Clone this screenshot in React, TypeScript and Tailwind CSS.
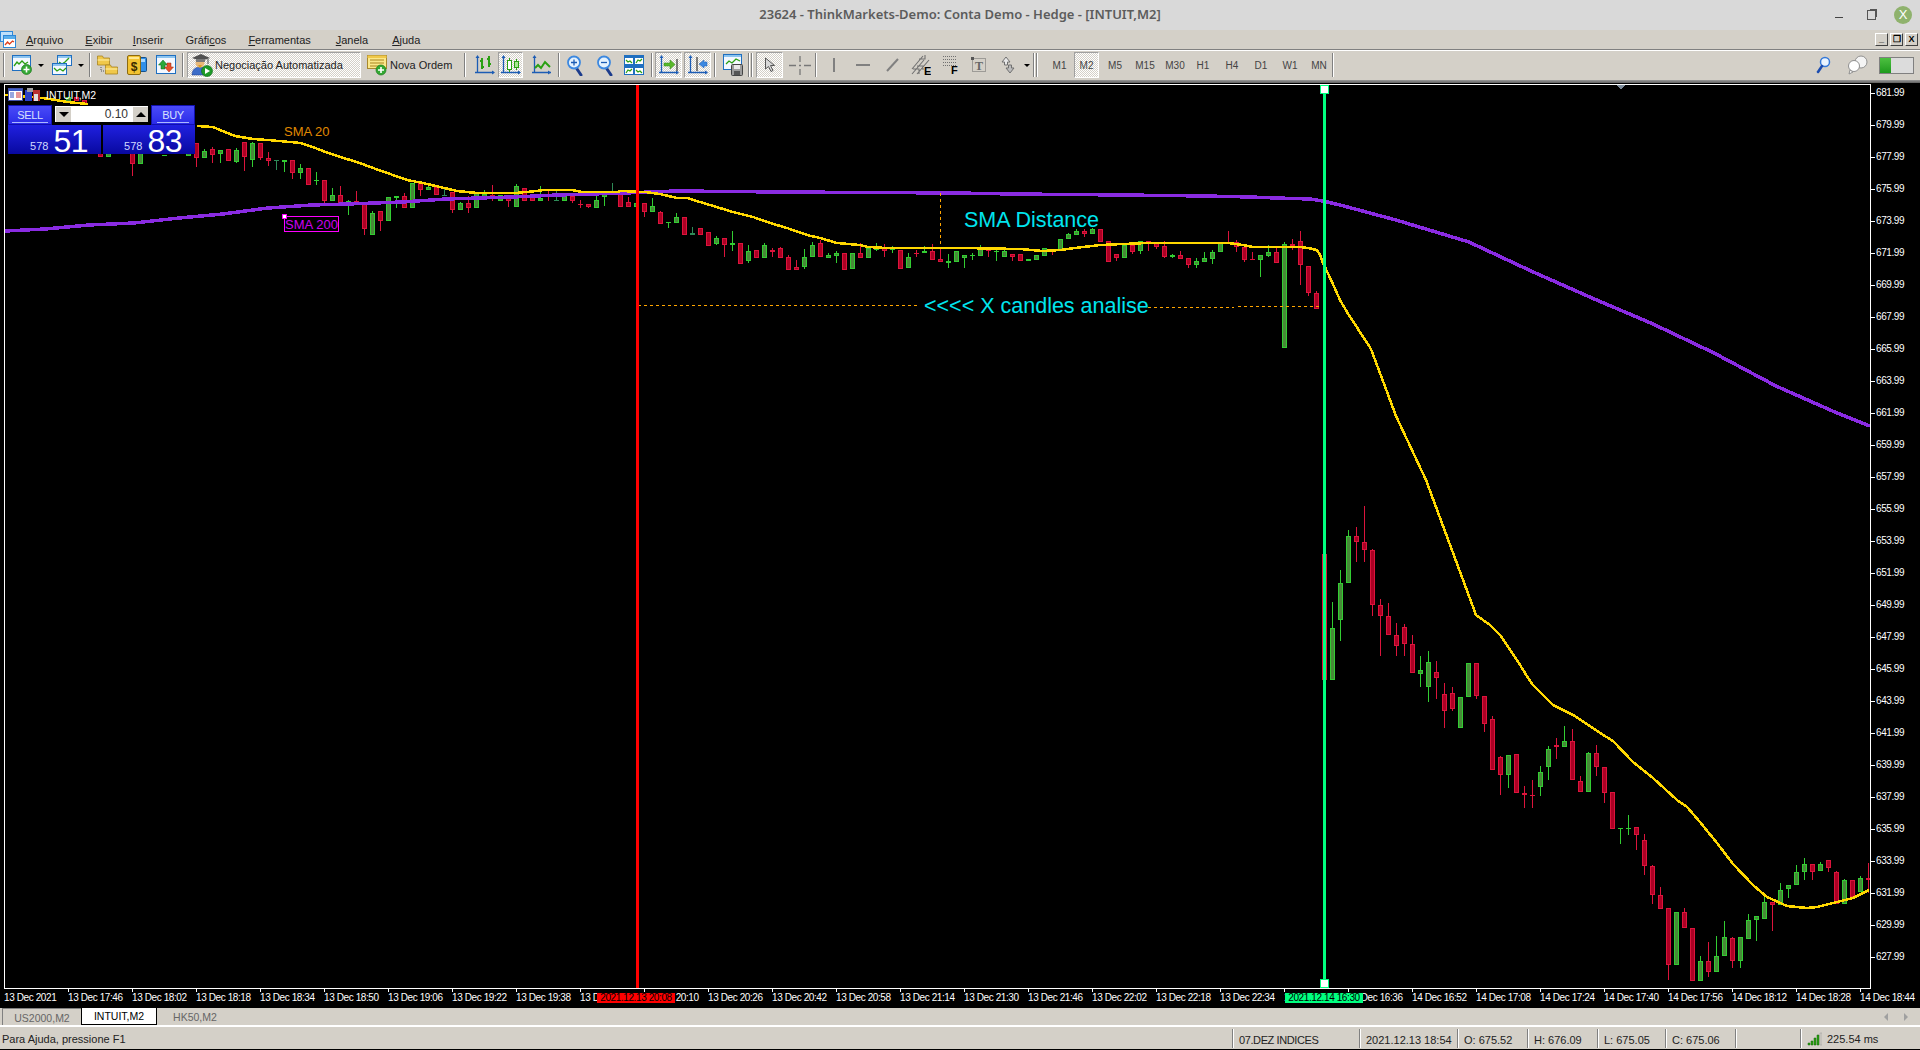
import React from "react";

const D =
  "r 143 158 143 167|g 151 158 149 158|r 149 155 147 163|g 150 154 150 163|r 149 161 149 161|g 150 162 148 163|r 142 157 142 171|g 143 160 142 167|r 143 158 143 160|r 158 161 152 166|d 160 161 160 170|g 160 162 160 172|r 160 173 160 179|g 168 173 164 179|r 168 185 168 185|g 180 181 172 185|r 180 201 180 203|g 195 201 188 201|r 195 203 186 203|g 201 204 200 215|r 201 203 191 203|r 204 229 204 235|g 213 235 211 235|r 211 221 211 231|g 197 221 197 221|g 196 198 196 208|r 196 208 193 208|g 183 208 183 208|r 183 190 183 196|g 187 190 185 190|r 187 195 187 195|d 195 196 188 196|r 192 210 192 213|g 203 210 202 210|r 203 208 196 213|g 193 208 193 208|g 194 198 190 198|r 195 196 185 201|g 195 201 195 201|r 198 201 198 207|g 186 207 184 207|r 188 201 188 201|r 195 201 195 201|g 198 201 186 201|r 195 196 191 201|d 200 201 191 201|g 196 201 196 201|r 196 201 196 203|r 204 205 200 208|r 204 207 204 208|g 200 208 195 208|g 194 197 194 206|d 192 193 183 193|r 193 207 193 207|r 202 207 197 207|" +
  "g 203 207 203 207|r 203 212 203 217|g 206 212 198 212|r 212 224 211 224|g 222 223 222 228|g 217 223 213 223|r 217 235 217 235|d 233 235 227 235|r 228 235 228 235|r 232 246 232 246|g 238 244 236 245|r 238 245 238 257|g 243 245 231 251|r 243 264 243 264|g 251 261 245 263|r 250 258 250 258|g 245 258 243 258|r 250 252 248 257|r 248 258 247 258|r 257 270 255 270|r 267 270 260 270|g 257 267 249 269|g 245 257 242 257|r 243 257 240 257|g 255 258 253 258|g 253 256 251 263|r 253 270 253 270|g 253 269 253 269|r 253 258 243 258|g 248 258 248 258|g 248 250 243 251|r 247 251 244 257|g 249 250 246 253|r 250 269 250 269|g 257 268 253 268|r 253 254 250 257|g 251 253 246 253|r 251 260 244 260|r 259 262 248 262|g 261 263 254 268|g 251 262 251 262|g 255 258 255 268|g 255 256 253 260|g 249 256 245 256|r 249 251 249 257|g 251 252 247 261|g 251 257 247 257|r 254 257 254 261|r 254 261 254 261|g 259 261 259 261|g 255 260 255 260|g 248 256 248 256|" +
  "r 249 251 249 255|g 239 250 239 250|g 234 239 233 239|g 231 235 229 235|r 231 234 229 237|g 229 234 228 234|r 229 242 229 242|r 241 262 241 262|r 254 258 254 261|g 245 258 245 258|r 245 252 245 254|g 241 251 241 254|r 241 244 241 251|r 243 247 243 249|r 246 257 241 258|g 255 257 254 258|r 255 259 251 259|r 258 265 258 268|g 261 265 258 268|g 258 262 252 262|g 252 259 250 264|g 243 252 243 252|r 242 243 231 243|r 242 247 240 252|r 247 260 247 262|r 259 260 252 260|g 255 260 255 277|g 252 256 245 257|r 252 263 247 263|g 244 348 242 348|r 244 246 239 250|r 241 265 231 285|r 266 293 266 296|r 293 309 291 309|r 554 680 554 680|" +
  "g 628 680 602 680|g 583 620 570 641|g 536 583 530 583|r 536 542 527 562|r 542 550 506 562|r 550 605 549 616|r 605 616 599 656|r 616 635 603 635|r 635 646 623 656|r 627 644 624 656|r 644 673 635 673|g 670 674 656 687|g 662 687 651 702|r 672 678 661 699|r 694 711 683 728|r 693 709 687 711|g 697 728 697 728|g 663 697 663 697|r 663 696 663 699|r 696 724 696 732|r 719 770 716 770|r 757 775 756 795|g 755 775 755 788|r 754 793 754 793|r 793 795 786 808|r 795 796 780 808|g 772 787 766 796|g 749 767 746 780|r 745 747 738 759|g 741 747 726 747|r 741 780 729 780|r 781 792 776 792|g 753 792 752 792|r 753 767 745 776|r 767 793 767 803|r 792 829 792 829|" +
  "g 828 829 828 844|g 828 829 815 835|r 827 835 827 850|r 840 866 834 875|r 866 895 865 904|r 895 909 887 909|r 908 965 908 980|g 912 965 912 965|r 912 928 908 928|r 928 981 928 981|g 961 981 956 981|r 961 972 942 977|g 956 972 936 972|g 937 956 921 956|r 938 961 937 968|g 937 961 937 968|g 920 939 914 939|g 916 920 916 941|g 902 919 896 919|r 902 905 902 931|g 890 905 883 905|g 885 889 885 898|g 872 885 865 885|g 864 872 858 880|r 864 872 864 880|g 864 871 862 871|r 860 868 860 872|r 872 904 871 904|g 880 904 879 904|r 880 897 880 897|g 878 892 876 892|r 878 880 863 893";

type C = { x: number; c: string; a: number; b: number; t: number; l: number };
const candles: C[] = D.split("|").map((s, i) => {
  const [c, a, b, t, l] = s.split(" ");
  return { x: 196 + 8 * i, c, a: +a, b: +b, t: +t, l: +l };
});
const extra: C[] = [
  { x: 68, c: "g", a: 97, b: 103, t: 97, l: 103 },
  { x: 76, c: "r", a: 97, b: 101, t: 97, l: 101 },
  { x: 84, c: "r", a: 100, b: 104, t: 100, l: 104 },
  { x: 100, c: "r", a: 150, b: 157, t: 150, l: 157 },
  { x: 108, c: "g", a: 150, b: 157, t: 150, l: 157 },
  { x: 132, c: "r", a: 150, b: 164, t: 150, l: 176 },
  { x: 140, c: "g", a: 150, b: 164, t: 150, l: 164 },
  { x: 164, c: "g", a: 155, b: 156, t: 155, l: 156 },
  { x: 188, c: "g", a: 150, b: 156, t: 150, l: 156 },
];

const EDGE: Record<string, string> = { r: "#dc143c", g: "#32cd32", d: "#2e8b57" };
const FILL: Record<string, string> = { r: "#ad0024", g: "#478a38", d: "#2e8b57" };

const yellowA = "5,95 33,97 50,99 67,102 88,104";
const yellowB =
  "197,126 213,127 220,130 235,136 253,139 268,140 290,142 300,143 310,146 323,151 340,157 357,162 373,168 390,174 407,180 423,183 440,187 457,191 477,193 515,193 537,191 543,190 572,190 582,192 618,192 620,191 645,192 660,194 677,198 687,198 710,205 733,212 753,217 770,223 787,228 807,235 820,238 837,243 860,245 868,247 887,248 963,248 1020,249 1043,251 1060,250 1075,248 1092,246 1100,245 1123,244 1147,243 1228,243 1243,245 1253,247 1300,247 1308,248 1317,250 1320,255 1323,263 1332,282 1340,300 1347,312 1371,349 1396,416 1426,480 1476,615 1490,625 1500,635 1517,660 1525,673 1533,685 1553,705 1573,715 1593,728 1600,733 1613,741 1633,762 1653,778 1677,800 1687,807 1700,822 1717,843 1733,864 1753,885 1767,897 1787,906 1807,908 1817,907 1833,903 1853,898 1869,890";
const purple =
  "5,231 45,229 89,225 134,223 179,218 223,214 268,208 312,205 348,204 402,202 446,199 513,197 558,195 625,193 676,191 781,192 957,193 1013,194 1124,195 1205,196 1251,197 1276,198 1310,199 1323,201 1340,205 1396,220 1469,242 1531,271 1592,298 1653,324 1714,353 1776,386 1837,413 1870,426";

const prices = Array.from({ length: 28 }, (_, i) => (681.99 - i * 2).toFixed(2));
const times = [
  "13 Dec 17:46", "13 Dec 18:02", "13 Dec 18:18", "13 Dec 18:34", "13 Dec 18:50", "13 Dec 19:06", "13 Dec 19:22", "13 Dec 19:38",
  "13 Dec 19:54", "13 Dec 20:10", "13 Dec 20:26", "13 Dec 20:42", "13 Dec 20:58", "13 Dec 21:14", "13 Dec 21:30", "13 Dec 21:46",
  "13 Dec 22:02", "13 Dec 22:18", "13 Dec 22:34", "13 Dec 22:50", "14 Dec 16:36", "14 Dec 16:52", "14 Dec 17:08", "14 Dec 17:24",
  "14 Dec 17:40", "14 Dec 17:56", "14 Dec 18:12", "14 Dec 18:28", "14 Dec 18:44",
];

function Chart() {
  return (
    <svg width={1865} height={903} viewBox="5 85 1865 903" className="block" shapeRendering="crispEdges">
      {[...extra, ...candles].map((k) => {
        const h = k.b - k.a;
        return (
          <g key={k.x}>
            <rect x={k.x} y={k.t} width={1} height={k.l - k.t} fill={EDGE[k.c]} />
            {h <= 2 ? (
              <rect x={k.x - 2} y={k.a} width={5} height={Math.max(h, 1)} fill={EDGE[k.c]} />
            ) : (
              <rect x={k.x - 1.5} y={k.a + 0.5} width={4} height={h - 1} fill={FILL[k.c]} stroke={EDGE[k.c]} strokeWidth={1} />
            )}
          </g>
        );
      })}
      <polyline points={purple} fill="none" stroke="#8a2be2" strokeWidth={3.5} />
      <polyline points={yellowA} fill="none" stroke="#ffd700" strokeWidth={2.5} />
      <polyline points={yellowB} fill="none" stroke="#ffd700" strokeWidth={2.5} />
      <line x1={638} x2={920} y1={305.5} y2={305.5} stroke="#ffa500" strokeDasharray="3 3" />
      <line x1={1148} x2={1234} y1={307.5} y2={307.5} stroke="#ffa500" strokeDasharray="3 3" />
      <line x1={1238} x2={1322} y1={306.5} y2={306.5} stroke="#ffa500" strokeDasharray="3 3" />
      <line x1={940.5} x2={940.5} y1={193} y2={247} stroke="#ffa500" strokeDasharray="3 3" />
      <rect x={636} y={85} width={3} height={903} fill="#ff0000" />
      <rect x={1323} y={85} width={3} height={903} fill="#00ff7f" />
      <rect x={1320.5} y={85.5} width={8} height={8} fill="#fff" stroke="#00ff7f" />
      <rect x={1320.5} y={979.5} width={8} height={8} fill="#fff" stroke="#00ff7f" />
      <path d="M1617 85h8l-4 5z" fill="#7c8a99" />
    </svg>
  );
}

const blue = "#1f6fc0";
const green = "#2aa012";

function Win({ x, y, w, h }: { x: number; y: number; w: number; h: number }) {
  return (
    <g>
      <rect x={x + 0.5} y={y + 0.5} width={w - 1} height={h - 1} fill="#f4f8ff" stroke={blue} />
      <rect x={x + 1} y={y + 1} width={w - 2} height={2} fill="#8cc4f0" />
    </g>
  );
}
function Plus({ x, y }: { x: number; y: number }) {
  return (
    <g>
      <circle cx={x} cy={y} r={5} fill="#33a833" stroke="#1c7a1c" strokeWidth={0.7} />
      <path d={`M${x - 3} ${y}h6M${x} ${y - 3}v6`} stroke="#fff" strokeWidth={1.6} />
    </g>
  );
}
const IconNew = () => (
  <svg width={20} height={20} viewBox="0 0 20 20">
    <Win x={0} y={0} w={19} h={16} />
    <path d="M2 11l3-4 2 2 3-3 3 3 3-2" fill="none" stroke={green} strokeWidth={1.3} />
    <Plus x={14.5} y={14.5} />
  </svg>
);
const IconProfiles = () => (
  <svg width={20} height={20} viewBox="0 0 20 20">
    <Win x={5} y={0} w={15} h={11} />
    <path d="M7 7l3 2 3-2 4-4" fill="none" stroke={green} strokeWidth={1.3} />
    <Win x={0} y={8} w={15} h={12} />
    <path d="M2 13l3 3 3-2 3 2 3-3" fill="none" stroke={green} strokeWidth={1.3} />
  </svg>
);
const Folder = ({ x, y, w }: { x: number; y: number; w: number }) => (
  <g>
    <path d={`M${x} ${y + 1}h5l1 2h${w - 6}v7h-${w}z`} fill="#f0c84a" stroke="#a88420" strokeWidth={0.8} />
    <path d={`M${x} ${y + 5}h${w}`} stroke="#fff0a8" strokeWidth={1} />
  </g>
);
const IconFolder = () => (
  <svg width={21} height={20} viewBox="0 0 21 20">
    <Folder x={0.5} y={0} w={12} />
    <Folder x={8.5} y={9} w={12} />
    <path d="M4 12v4h4" fill="none" stroke="#555" strokeDasharray="1 1" />
  </svg>
);
const IconMarket = () => (
  <svg width={20} height={20} viewBox="0 0 20 20">
    <rect x={7.5} y={2.5} width={12} height={14} rx={1} fill="#2f8fe8" stroke="#14508c" />
    <rect x={9} y={4} width={9} height={3} fill="#a8d8ff" />
    <rect x={0.5} y={0.5} width={13} height={19} rx={1.5} fill="#f2c230" stroke="#8c6a10" />
    <rect x={2} y={2} width={10} height={2} fill="#ffe890" />
    <text x={7} y={16} textAnchor="middle" fontSize={12} fontWeight={700} fill="#3a2a00" fontFamily="Liberation Sans, sans-serif">$</text>
  </svg>
);
const IconUpDown = () => (
  <svg width={20} height={20} viewBox="0 0 20 20">
    <Win x={0} y={0} w={20} h={19} />
    <path d="M7 5l-4.5 5H5v4h4v-4h2.5z" fill="#2aa83a" stroke="#116a1c" strokeWidth={0.5} />
    <path d="M13 17l4.5-5H15V8h-4v4H8.5z" fill="#e8502a" stroke="#98280c" strokeWidth={0.5} />
  </svg>
);
const IconAuto = () => (
  <svg width={22} height={24} viewBox="0 0 22 24">
    <path d="M1 22c0-6 4-8 8-8s7 2 8 8z" fill="#3c6cc8" stroke="#24408c" strokeWidth={0.5} />
    <circle cx={9} cy={10} r={4.5} fill="#e8b878" />
    <path d="M7 12l2 3 2-3z" fill="#e0a020" />
    <path d="M1 5l9-4 9 4-9 3z" fill="#505050" />
    <path d="M5 6v3h9V6z" fill="#787878" />
    <path d="M17 6v5" stroke="#505050" />
    <circle cx={16} cy={18} r={5.5} fill="#1e9a28" stroke="#0e6a18" strokeWidth={0.6} />
    <path d="M14 15l5 3-5 3z" fill="#fff" />
  </svg>
);
const IconOrder = () => (
  <svg width={20} height={21} viewBox="0 0 20 21">
    <rect x={0.5} y={0.5} width={19} height={13} fill="#fbe88a" stroke="#a8882c" />
    <rect x={0.5} y={0.5} width={19} height={2.5} fill="#f0c84a" />
    <path d="M3 5h14M3 8h14M3 11h9" stroke="#a88420" />
    <Plus x={14} y={15} />
  </svg>
);
const Axes = () => <path d="M3.5 2v16M1 17.5h19" stroke="#1c5cb4" strokeWidth={1.3} fill="none" />;
const IconBars = () => (
  <svg width={22} height={20} viewBox="0 0 22 20">
    <path d="M3.5 0l-2 3h4zM21 17.5l-3-2v4z" fill="#1c5cb4" />
    <Axes />
    <path d="M8 3v11M6 6h2M8 12h2M15 1v11M13 4h2M15 9h2" stroke={green} strokeWidth={2} fill="none" />
  </svg>
);
const IconCandles = () => (
  <svg width={21} height={20} viewBox="0 0 21 20">
    <path d="M3.5 0l-2 3h4zM21 17.5l-3-2v4z" fill="#1c5cb4" />
    <Axes />
    <rect x={7.5} y={5.5} width={4} height={9} fill="#fff" stroke={green} />
    <rect x={14.5} y={6.5} width={4} height={6} fill="#a8e890" stroke={green} />
    <path d="M9.5 3v2M9.5 15v2M16.5 4v2M16.5 13v2" stroke={green} />
  </svg>
);
const IconLine = () => (
  <svg width={20} height={20} viewBox="0 0 20 20">
    <path d="M3.5 0l-2 3h4zM20 17.5l-3-2v4z" fill="#1c5cb4" />
    <Axes />
    <path d="M4 13l3-3 3 3 4-6 5 5" fill="none" stroke={green} strokeWidth={2} />
  </svg>
);
const IconZoom = ({ plus }: { plus?: boolean }) => (
  <svg width={16} height={21} viewBox="0 0 16 21">
    <path d="M10 14l4 6" stroke="#1c3c8c" strokeWidth={3} strokeLinecap="round" />
    <circle cx={7} cy={7.5} r={6} fill="#e4f2ff" stroke="#3c88e0" strokeWidth={1.8} />
    <path d={plus ? "M4 7.5h6M7 4.5v6" : "M4 7.5h6"} stroke="#1c5cb4" strokeWidth={1.3} />
  </svg>
);
const Tile = ({ x, y, up }: { x: number; y: number; up?: boolean }) => (
  <g>
    <rect x={x + 0.5} y={y + 0.5} width={9} height={9} fill="#fff" stroke={blue} />
    <rect x={x + 1} y={y + 1} width={8} height={2} fill={blue} />
    <path d={up ? `M${x + 2} ${y + 8}l2-3 2 1 2-2` : `M${x + 2} ${y + 5}l2 2 2-1 2 2`} fill="none" stroke={green} strokeWidth={1.2} />
  </g>
);
const IconTile = () => (
  <svg width={20} height={20} viewBox="0 0 20 20">
    <Tile x={0} y={0} />
    <Tile x={10} y={0} up />
    <Tile x={0} y={10} up />
    <Tile x={10} y={10} />
  </svg>
);
const IconScroll = () => (
  <svg width={22} height={20} viewBox="0 0 22 20">
    <path d="M3.5 0l-2 3h4zM21 17.5l-3-2v4z" fill="#1c5cb4" />
    <Axes />
    <path d="M19 4v12" stroke="#333" strokeWidth={1.2} />
    <path d="M6 8h6V5l5 4.5L12 14v-3H6z" fill="#5ab82a" stroke="#2a8812" strokeWidth={0.5} />
  </svg>
);
const IconShift = () => (
  <svg width={22} height={20} viewBox="0 0 22 20">
    <path d="M3.5 0l-2 3h4zM21 17.5l-3-2v4z" fill="#1c5cb4" />
    <Axes />
    <path d="M10 2v14" stroke="#333" strokeWidth={1.2} />
    <path d="M20 7h-3V5l-5 4 5 4v-2h3z" fill="#3c88e0" stroke="#1c5cb4" strokeWidth={0.5} />
  </svg>
);
const IconTemplate = () => (
  <svg width={20} height={22} viewBox="0 0 20 22">
    <Win x={0} y={0} w={19} h={16} />
    <path d="M3 10l3-3 3 2 4-4 4 2" fill="none" stroke={green} strokeWidth={1.3} />
    <rect x={8.5} y={10.5} width={11} height={11} rx={1} fill="#9c9c9c" stroke="#444" />
    <rect x={11} y={11} width={6} height={4} fill="#e8e8e8" />
    <rect x={11} y={17} width={6} height={4} fill="#555" />
  </svg>
);
const IconPointer = () => (
  <svg width={12} height={16} viewBox="0 0 12 16">
    <path d="M1.5 1v11l3-2.5 2.5 5 2-1-2.5-5h4z" fill="#d8d8d8" stroke="#555" />
  </svg>
);
const IconCross = () => (
  <svg width={22} height={19} viewBox="0 0 22 19">
    <path d="M0 9.5h7M15 9.5h7M11 0v6M11 13v6M10 9.5h2" stroke="#777" strokeWidth={1.3} />
  </svg>
);
const IconV = () => <svg width={4} height={16} viewBox="0 0 4 16"><path d="M2 1v14" stroke="#808080" strokeWidth={2} /></svg>;
const IconH = () => <svg width={14} height={4} viewBox="0 0 14 4"><path d="M0 2h14" stroke="#808080" strokeWidth={2} /></svg>;
const IconTrend = () => <svg width={13} height={14} viewBox="0 0 13 14"><path d="M1 13L12 1" stroke="#808080" strokeWidth={2} /></svg>;
const IconFiboE = () => (
  <svg width={20} height={22} viewBox="0 0 20 22">
    <path d="M1 20l12-14M1 15l11-13M6 20L18 6M8 5h6v-4M2 15h6v5M6 12h6v4" fill="none" stroke="#707070" strokeWidth={1.1} />
    <text x={13} y={21} fontSize={11} fontWeight={700} fill="#000" fontFamily="Liberation Sans, sans-serif">E</text>
  </svg>
);
const IconFiboF = () => (
  <svg width={16} height={20} viewBox="0 0 16 20">
    <path d="M0 1.5h14M0 4.5h14M0 7.5h14M0 10.5h14" stroke="#707070" strokeDasharray="1 1" />
    <text x={8} y={19} fontSize={11} fontWeight={700} fill="#000" fontFamily="Liberation Sans, sans-serif">F</text>
  </svg>
);
const IconText = () => (
  <svg width={16} height={16} viewBox="0 0 16 16">
    <rect x={1.5} y={1.5} width={13} height={13} fill="none" stroke="#666" strokeDasharray="1 1" />
    <rect x={0} y={0} width={3} height={3} fill="#555" />
    <text x={8} y={13} textAnchor="middle" fontSize={12} fontWeight={700} fill="#666" fontFamily="Liberation Serif, serif">T</text>
  </svg>
);
const IconArrows = () => (
  <svg width={14} height={18} viewBox="0 0 14 18">
    <path d="M5 1L1 6h2.5v3h3V6H9z" fill="#e8e8e8" stroke="#707070" />
    <path d="M9 17l4-5h-2.5V9h-3v3H5z" fill="#bcbcbc" stroke="#707070" />
  </svg>
);
const Caret = () => <span className="w-0 h-0 border-x-[3px] border-x-transparent border-t-[3px] border-t-black" />;
const Sep = () => <span className="block w-[2px] h-[24px] border-l border-r border-l-[#808080] border-r-white" />;
const Sel = ({ w, children }: { w: string; children: React.ReactNode }) => (
  <span className={`${w} h-[26px] flex items-center justify-center border border-t-[#a0a0a0] border-l-[#a0a0a0] border-r-white border-b-white bg-[repeating-conic-gradient(#ffffff_0_25%,#d4d0c8_0_50%)] bg-[length:2px_2px]`}>
    {children}
  </span>
);

function Toolbar() {
  return (
    <div className="h-[31px] bg-[#d4d0c8] border-t border-[#808080] shadow-[inset_0_1px_0_#ffffff] flex items-center text-[11px] text-[#222] whitespace-nowrap">
      <span className="ml-[3px] flex"><Sep /></span>
      <span className="ml-[7px] flex"><IconNew /></span>
      <span className="ml-[6px] flex"><Caret /></span>
      <span className="ml-[8px] flex"><IconProfiles /></span>
      <span className="ml-[6px] flex"><Caret /></span>
      <span className="ml-[5px] flex"><Sep /></span>
      <span className="ml-[6px] flex"><IconFolder /></span>
      <span className="ml-[9px] flex"><IconMarket /></span>
      <span className="ml-[9px] flex"><IconUpDown /></span>
      <span className="ml-[6px] flex"><Sep /></span>
      <span className="ml-[3px] flex">
        <Sel w="w-[174px] gap-[2px] justify-start! pl-[3px]">
          <IconAuto />
          <span>Negociação Automatizada</span>
        </Sel>
      </span>
      <span className="ml-[6px] flex"><IconOrder /></span>
      <span className="ml-[3px] w-[60px]">Nova Ordem</span>
      <span className="ml-[14px] flex"><Sep /></span>
      <span className="ml-[8px] flex"><IconBars /></span>
      <span className="ml-[2px] flex"><Sel w="w-[25px]"><IconCandles /></Sel></span>
      <span className="ml-[8px] flex"><IconLine /></span>
      <span className="ml-[7px] flex"><Sep /></span>
      <span className="ml-[7px] flex"><IconZoom plus /></span>
      <span className="ml-[14px] flex"><IconZoom /></span>
      <span className="ml-[11px] flex"><IconTile /></span>
      <span className="ml-[7px] flex"><Sep /></span>
      <span className="ml-[2px] flex"><Sel w="w-[27px]"><IconScroll /></Sel></span>
      <span className="ml-[2px] flex"><Sel w="w-[27px]"><IconShift /></Sel></span>
      <span className="ml-[3px] flex"><Sep /></span>
      <span className="ml-[7px] flex"><IconTemplate /></span>
      <span className="ml-[5px] flex"><Sep /></span>
      <span className="ml-[1px] flex"><Sep /></span>
      <span className="ml-[3px] flex"><Sel w="w-[27px]"><IconPointer /></Sel></span>
      <span className="ml-[6px] flex"><IconCross /></span>
      <span className="ml-[4px] flex"><Sep /></span>
      <span className="ml-[15px] flex"><IconV /></span>
      <span className="ml-[20px] flex"><IconH /></span>
      <span className="ml-[16px] flex"><IconTrend /></span>
      <span className="ml-[12px] flex"><IconFiboE /></span>
      <span className="ml-[12px] flex"><IconFiboF /></span>
      <span className="ml-[12px] flex"><IconText /></span>
      <span className="ml-[14px] flex"><IconArrows /></span>
      <span className="ml-[9px] flex"><Caret /></span>
      <span className="ml-[3px] flex"><Sep /></span>
      <span className="ml-[1px] flex"><Sep /></span>
      <div className="ml-[7px] flex items-center text-center text-[10px] text-[#444]">
        <span className="w-[29px]">M1</span>
        <Sel w="w-[25px]">M2</Sel>
        <span className="w-[32px]">M5</span>
        <span className="w-[28px]">M15</span>
        <span className="w-[32px]">M30</span>
        <span className="w-[24px]">H1</span>
        <span className="w-[34px]">H4</span>
        <span className="w-[24px]">D1</span>
        <span className="w-[34px]">W1</span>
        <span className="w-[24px]">MN</span>
      </div>
      <span className="ml-[1px] flex"><Sep /></span>
      <span className="ml-auto flex">
        <svg width={16} height={18} viewBox="0 0 16 18">
          <circle cx={10} cy={6} r={4.5} fill="#eaf4ff" stroke="#3478d8" strokeWidth={1.5} />
          <path d="M7 10l-4 6" stroke="#1c4cb0" strokeWidth={2.5} strokeLinecap="round" />
        </svg>
      </span>
      <span className="ml-[16px] flex">
        <svg width={22} height={20} viewBox="0 0 22 20">
          <circle cx={14} cy={7} r={6} fill="#f4f4f4" stroke="#909090" />
          <circle cx={7} cy={11} r={5.5} fill="#fff" stroke="#909090" />
          <path d="M3 15l-1 4 4-2z" fill="#fff" stroke="#909090" />
        </svg>
      </span>
      <span className="ml-[10px] mr-[6px] w-[35px] h-[17px] border border-[#808080] bg-[#dcdcdc] flex">
        <span className="w-[11px] bg-gradient-to-b from-[#4cc040] to-[#1c9a1c]" />
      </span>
    </div>
  );
}

function MenuBar() {
  const it = "text-[#222] whitespace-nowrap";
  return (
    <div className="h-[19px] bg-[#d4d0c8] flex items-center text-[11px] pt-[2px]">
      <svg width={16} height={17} viewBox="0 0 16 17" className="shrink-0 -mt-[2px]">
        <rect x={0.5} y={0.5} width={12} height={10} fill="#bfe0fa" stroke="#2e88d8" />
        <rect x={3.5} y={4.5} width={12} height={12} fill="#fff" stroke="#2e88d8" />
        <rect x={4} y={5} width={11} height={3} fill="#5aaeea" />
        <path d="M5 14l2.5-3 2 2 3-3 1.5 1" fill="none" stroke="#e0401c" strokeWidth={1.3} />
      </svg>
      <span className={`${it} ml-[10px]`}><span className="underline">A</span>rquivo</span>
      <span className={`${it} ml-[22px]`}><span className="underline">E</span>xibir</span>
      <span className={`${it} ml-[20px]`}><span className="underline">I</span>nserir</span>
      <span className={`${it} ml-[22px]`}>Gráfi<span className="underline">c</span>os</span>
      <span className={`${it} ml-[22px]`}><span className="underline">F</span>erramentas</span>
      <span className={`${it} ml-[25px]`}><span className="underline">J</span>anela</span>
      <span className={`${it} ml-[24px]`}><span className="underline">A</span>juda</span>
      <div className="ml-auto mr-[2px] -mt-[2px] flex gap-[2px]">
        {["_", "❐", "X"].map((g) => (
          <span key={g} className="w-[13px] h-[13px] bg-[#d4d0c8] border border-t-white border-l-white border-r-[#404040] border-b-[#404040] text-[9px] leading-[11px] text-center font-bold text-black">
            {g}
          </span>
        ))}
      </div>
    </div>
  );
}

function TitleBar() {
  return (
    <div className="h-[30px] bg-[#d9d9d9] relative flex items-center justify-center">
      <span className="text-[13px] font-semibold text-[#5c5c5c] font-['Noto_Sans',sans-serif]">
        23624 - ThinkMarkets-Demo: Conta Demo - Hedge - [INTUIT,M2]
      </span>
      <div className="absolute right-[8px] top-[6px] flex items-center">
        <span className="w-[8px] h-[1px] bg-[#444] mt-[5px]" />
        <span className="ml-[24px] w-[9px] h-[10px] border border-[#555] shadow-[2px_-2px_0_-1px_#555]" />
        <span className="ml-[18px] w-[18px] h-[18px] rounded-full bg-[#8fb26d] text-white text-[13px] leading-[18px] text-center font-['Liberation_Sans',sans-serif]">
          X
        </span>
      </div>
    </div>
  );
}

function Panel() {
  return (
    <div className="absolute left-[3px] top-[20px] w-[187px] h-[49px] bg-black flex flex-col font-['Liberation_Sans',sans-serif] text-white">
      <div className="h-[20px] flex items-start">
        <div className="w-[44px] h-[20px] bg-gradient-to-b from-[#4a4af8] to-[#2a2ae8] border border-[#1010b0] text-[11px] text-[#d8e0ff] text-center leading-[19px] tracking-[-0.3px]">
          <span className="border-b border-[#aab8ff] px-[5px] pb-[1px]">SELL</span>
        </div>
        <div className="ml-[3px] mt-[1px] h-[16px] w-[93px] flex">
          <span className="w-[16px] bg-[#d4d0c8] flex items-center justify-center border-t border-l border-white"><span className="w-0 h-0 border-x-[5px] border-x-transparent border-t-[5px] border-t-black" /></span>
          <span className="flex-1 bg-white text-[#333] text-[12px] leading-[16px] text-right pr-[4px]">0.10</span>
          <span className="w-[16px] bg-[#d4d0c8] flex items-center justify-center border-t border-l border-white"><span className="w-0 h-0 border-x-[5px] border-x-transparent border-b-[5px] border-b-black" /></span>
        </div>
        <div className="ml-[3px] w-[44px] h-[20px] bg-gradient-to-b from-[#4a4af8] to-[#2a2ae8] border border-[#1010b0] text-[11px] text-[#d8e0ff] text-center leading-[19px] tracking-[-0.3px]">
          <span className="border-b border-[#aab8ff] px-[5px] pb-[1px]">BUY</span>
        </div>
      </div>
      <div className="h-[29px] flex gap-[2px]">
        <div className="w-[93px] bg-gradient-to-b from-[#2020e0] to-[#0808a0] flex items-end justify-end pr-[13px]">
          <span className="text-[11px] leading-[16px] text-[#d0d8ff] mr-[5px]">578</span>
          <span className="text-[32px] leading-[25px] font-medium tracking-[-0.5px]">51</span>
        </div>
        <div className="w-[92px] bg-gradient-to-b from-[#2020e0] to-[#0808a0] flex items-end justify-end pr-[13px]">
          <span className="text-[11px] leading-[16px] text-[#d0d8ff] mr-[5px]">578</span>
          <span className="text-[32px] leading-[25px] font-medium tracking-[-0.5px]">83</span>
        </div>
      </div>
    </div>
  );
}

function Overlays() {
  const base = "absolute whitespace-nowrap font-['Liberation_Sans',sans-serif]";
  return (
    <>
      <div className="absolute left-[3px] top-[3px] flex items-center gap-[2px]">
        <svg width={15} height={13} viewBox="0 0 15 13">
          <rect x={0.5} y={0.5} width={14} height={12} fill="#fff" stroke="#4050a8" />
          <rect x={1} y={1} width={13} height={2} fill="#4060c8" />
          <path d="M2 5h4M2 7h4M2 9h4" stroke="#3050c0" />
          <path d="M8 5h5M8 7h5M8 9h5" stroke="#d03030" />
        </svg>
        <svg width={15} height={13} viewBox="0 0 15 13">
          <rect x={0} y={2} width={7} height={11} fill="#2a40c8" />
          <rect x={8} y={2} width={7} height={11} fill="#b83030" />
          <rect x={2} y={0} width={6} height={4} fill="#a0a0a0" />
          <rect x={9} y={6} width={4} height={7} fill="#e0e0e0" />
        </svg>
        <span className="text-[10.5px] text-white ml-[4px] leading-[12px] mt-[1px] font-['Liberation_Sans',sans-serif]">INTUIT,M2</span>
      </div>
      <Panel />
      <span className={`${base} left-[279px] top-[39px] text-[13px] leading-[16px] text-[#e08a00]`}>SMA 20</span>
      <span className={`${base} left-[279px] top-[131px] w-[55px] h-[16px] border border-[#ff00ff] text-[13px] leading-[15px] text-[#cc00ee] text-center`}>SMA 200</span>
      <span className="absolute left-[277px] top-[129px] w-[5px] h-[5px] bg-white border border-[#ff00ff]" />
      <span className={`${base} left-[959px] top-[123px] text-[21.5px] leading-[24px] text-[#00e5ee]`}>SMA Distance</span>
      <span className={`${base} left-[919px] top-[209px] text-[21.5px] leading-[24px] text-[#00e5ee]`}>{"<<<< X candles analise"}</span>
    </>
  );
}

function StatusBar() {
  const seg = "h-[19px] border-l border-[#808080] shadow-[inset_1px_0_0_#ffffff] pl-[6px] pt-[2px] leading-[19px] shrink-0 whitespace-nowrap";
  return (
    <div className="h-[24px] bg-[#d4d0c8] border-t border-white border-b border-b-black flex items-center text-[11px] text-[#222] font-['Liberation_Sans',sans-serif]">
      <span className="w-[1232px] pl-[2px] pt-[2px] shrink-0">Para Ajuda, pressione F1</span>
      <span className={`${seg} w-[127px] tracking-[-0.4px]`}>07.DEZ INDICES</span>
      <span className={`${seg} w-[98px]`}>2021.12.13 18:54</span>
      <span className={`${seg} w-[70px]`}>O: 675.52</span>
      <span className={`${seg} w-[70px]`}>H: 676.09</span>
      <span className={`${seg} w-[68px]`}>L: 675.05</span>
      <span className={`${seg} w-[70px]`}>C: 675.06</span>
      <span className={`${seg} w-[65px]`} />
      <span className={`${seg} flex-1 flex items-center`}>
        <svg width={15} height={14} viewBox="0 0 15 14" className="mr-[5px]">
          <path d="M1 11h2v2H1zM4 9h2v4H4zM7 6h2v7H7zM10 3h2v10h-2z" fill="#2aa012" stroke="#186a0c" strokeWidth={0.5} />
          <path d="M13 1h2v12h-2z" fill="#d4d0c8" stroke="#999" strokeWidth={0.5} />
        </svg>
        225.54 ms
      </span>
    </div>
  );
}

export default function App() {
  const axis = "text-[10px] leading-[12px] tracking-[-0.4px] text-white whitespace-nowrap";
  return (
    <div className="w-[1920px] h-[1050px] flex flex-col overflow-hidden bg-black font-['Liberation_Sans',sans-serif]">
      <TitleBar />
      <MenuBar />
      <Toolbar />
      <div className="h-[3px] bg-gradient-to-b from-[#9a9a9a] to-[#606060]" />
      <div className="h-[1px] bg-black" />
      <div className="flex-1 flex flex-col bg-black min-h-0">
        <div className="flex h-[905px]">
          <div className="ml-[4px] w-[1867px] h-[905px] border border-white relative overflow-hidden bg-black">
            <Chart />
            <Overlays />
          </div>
          <div className="flex-1 flex flex-col gap-[16px] pt-[1px] overflow-hidden">
            {prices.map((p) => (
              <div key={p} className="h-[16px] flex items-center">
                <span className="w-[4px] h-px bg-white shrink-0" />
                <span className={`${axis} ml-[1px]`}>{p}</span>
              </div>
            ))}
          </div>
        </div>
        <div className="h-[18px] relative flex pl-[4px] overflow-hidden">
          <div className="w-[64px] pt-[3px] shrink-0 flex flex-col"><span className={axis}>13 Dec 2021</span></div>
          {times.map((t) => (
            <div key={t} className="w-[64px] shrink-0 flex flex-col">
              <span className="w-px h-[3px] bg-white shrink-0" />
              <span className={axis}>{t}</span>
            </div>
          ))}
          <span className="absolute left-[597px] top-[4px] w-[78px] h-[10px] bg-[#ff0000] text-black text-[10px] leading-[10px] tracking-[-0.4px] text-center">2021.12.13 20:08</span>
          <span className="absolute left-[1285px] top-[4px] w-[78px] h-[10px] bg-[#00ff7f] text-black text-[10px] leading-[10px] tracking-[-0.4px] text-center">2021.12.14 16:30</span>
        </div>
      </div>
      <div className="h-[19px] bg-[#d4d0c8] border-t border-black border-b border-b-white flex items-stretch text-[10.5px] shrink-0 relative">
        <span className="ml-[2px] w-[79px] text-center leading-[18px] text-[#666] border-l border-t border-[#808080]">US2000,M2</span>
        <span className="w-[76px] text-center leading-[16px] text-black bg-white border-l border-r border-b border-black">INTUIT,M2</span>
        <span className="w-[76px] text-center leading-[18px] text-[#666]">HK50,M2</span>
        <span className="ml-auto flex items-center gap-[16px] mr-[12px]">
          <span className="w-0 h-0 border-y-[4px] border-y-transparent border-r-[4px] border-r-[#a0a0a0]" />
          <span className="w-0 h-0 border-y-[4px] border-y-transparent border-l-[4px] border-l-[#a0a0a0]" />
        </span>
      </div>
      <StatusBar />
    </div>
  );
}
